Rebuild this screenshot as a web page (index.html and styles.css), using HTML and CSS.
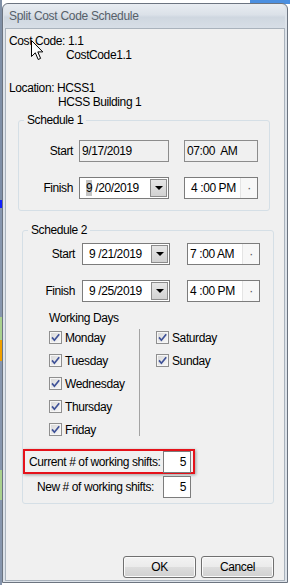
FILE: index.html
```html
<!DOCTYPE html>
<html lang="en">
<head>
    <meta charset="UTF-8">
    <title>Split Cost Code Schedule</title>
    <link rel="stylesheet" href="styles.css">
</head>
<body>
    <svg width="0" height="0" class="defs">
        <defs>
            <linearGradient id="cbg" x1="0" y1="0" x2="1" y2="1">
                <stop offset="0" stop-color="#d9d9d9"/>
                <stop offset="1" stop-color="#f7f7f7"/>
            </linearGradient>
            <symbol id="cb" viewBox="0 0 13 13">
                <rect x="0.5" y="0.5" width="12" height="12" fill="#f6f6f6" stroke="#8f8f8f"/>
                <rect x="2" y="2" width="9" height="9" fill="url(#cbg)"/>
                <path d="M3 6.4 L5.4 9.2 L10.2 3.2" fill="none" stroke="#3f5298" stroke-width="1.7"/>
            </symbol>
        </defs>
    </svg>

    <div class="window">
        <div class="titlebar">Split Cost Code Schedule</div>
        <div class="client">
            <div class="info">
                <div>Cost Code: 1.1</div>
                <div class="sub-code">CostCode1.1</div>
                <div class="loc">Location: HCSS1</div>
                <div class="sub-loc">HCSS Building 1</div>
            </div>

            <!-- schedule 1 -->
            <div class="group g1">
                <span class="legend">Schedule 1</span>
                <div class="row">
                    <span class="label">Start</span>
                    <div class="box date disabled">9/17/2019</div>
                    <div class="box time disabled">07:00  AM</div>
                </div>
                <div class="row">
                    <span class="label">Finish</span>
                    <div class="box date"><span class="sel">9</span> /20/2019<span class="dd"><i></i></span></div>
                    <div class="box time pad7">4 :00 PM<span class="spin">·</span></div>
                </div>
            </div>

            <!-- schedule 2 -->
            <div class="group g2">
                <span class="legend">Schedule 2</span>
                <div class="row">
                    <span class="label">Start</span>
                    <div class="box date">9 /21/2019<span class="dd"><i></i></span></div>
                    <div class="box time">7 :00 AM<span class="spin">·</span></div>
                </div>
                <div class="row">
                    <span class="label">Finish</span>
                    <div class="box date">9 /25/2019<span class="dd"><i></i></span></div>
                    <div class="box time">4 :00 PM<span class="spin">·</span></div>
                </div>

                <div class="wd">Working Days</div>
                <div class="days">
                    <div class="col left">
                        <div class="check"><svg width="13" height="13"><use href="#cb"/></svg>Monday</div>
                        <div class="check"><svg width="13" height="13"><use href="#cb"/></svg>Tuesday</div>
                        <div class="check"><svg width="13" height="13"><use href="#cb"/></svg>Wednesday</div>
                        <div class="check"><svg width="13" height="13"><use href="#cb"/></svg>Thursday</div>
                        <div class="check"><svg width="13" height="13"><use href="#cb"/></svg>Friday</div>
                    </div>
                    <div class="sep"></div>
                    <div class="col right">
                        <div class="check"><svg width="13" height="13"><use href="#cb"/></svg>Saturday</div>
                        <div class="check"><svg width="13" height="13"><use href="#cb"/></svg>Sunday</div>
                    </div>
                </div>

                <div class="shifts current">
                    <span>Current # of working shifts:</span>
                    <div class="num">5</div>
                </div>
                <div class="shifts new">
                    <span>New # of working shifts:</span>
                    <div class="num">5</div>
                </div>
            </div>

            <div class="buttons">
                <button class="btn">OK</button>
                <button class="btn">Cancel</button>
            </div>
        </div>

        <!-- mouse pointer -->
        <svg class="cursor" width="13" height="21" viewBox="0 0 13 21">
            <path d="M0.5 0.5 L0.5 16.5 L4.3 12.8 L7.2 19.5 L9.6 18.4 L6.8 11.9 L11.8 11.9 Z" fill="#fff" stroke="#000" stroke-width="1"/>
        </svg>
    </div>
</body>
</html>
```

FILE: styles.css
```css
*{
    margin: 0;
    padding: 0;
    box-sizing: border-box;
}

body{
    width: 290px;
    height: 585px;
    overflow: hidden;
    font-family: "Liberation Sans", Arial, sans-serif;
    font-size: 12px;
    letter-spacing: -0.4px;
    color: #000;
    background:
        linear-gradient(#7f8fa6 0, #7f8fa6 200px, #1020ff 200px, #1020ff 208px, #8796ad 208px,
            #8796ad 317px, #a9d18e 317px, #a9d18e 340px, #f0a000 340px, #f0a000 361px,
            #8796ad 361px, #8796ad 470px, #a9d18e 470px, #a9d18e 500px, #8796ad 500px) no-repeat 0 0 / 2px 100%,
        linear-gradient(#4b8fe0, #4b8fe0) no-repeat 250px 0 / 40px 4px,
        #fff;
}

.defs{
    position: absolute;
}

.window{
    position: relative;
    margin: 3px 0 0 2px;
    width: 286px;
    height: 580px;
    border: 1px solid #6c7480;
    border-radius: 6px 6px 0 0;
    background: #dde3ea;
    padding: 0 2px 1px 1px;
    display: flex;
    flex-direction: column;
}

.titlebar{
    height: 24px;
    line-height: 24px;
    padding-left: 5px;
    font-size: 12px;
    letter-spacing: -0.3px;
    color: #56606a;
    border-radius: 5px 5px 0 0;
    background: linear-gradient(#e9edf2, #dbe1e8 45%, #cfd7e0 55%, #d7dee6);
}

.client{
    flex: 1;
    background: #f0f0f0;
    border: 1px solid #a9b2bc;
    margin-left: 1px;
}

.info{
    padding: 5px 0 0 3px;
    line-height: 14px;
}

.sub-code{
    padding-left: 57px;
}

.loc{
    margin-top: 19px;
}

.sub-loc{
    padding-left: 49px;
}

.group{
    position: relative;
    width: 252px;
    border: 1px solid #d5dfe6;
    border-radius: 3px;
}

.legend{
    position: absolute;
    top: -8px;
    left: 5px;
    padding: 0 3px;
    line-height: 14px;
    background: #f0f0f0;
}

.g1{
    margin: 11px 0 0 12px;
    padding: 19px 0 11px 0;
}

.g2{
    margin: 19px 0 0 16px;
    padding: 12px 0 5px 0;
}

.row{
    display: flex;
    align-items: center;
    height: 22px;
}

.row + .row{
    margin-top: 15px;
}

.label{
    text-align: right;
}

.g1 .label{ width: 54px; margin-right: 6px; }
.g1 .date{ width: 90px; }
.g1 .time{ width: 74px; margin-left: 15px; }

.g2 .label{ width: 52px; margin-right: 7px; }
.g2 .date{ width: 88px; }
.g2 .time{ width: 73px; margin-left: 17px; }

.box{
    height: 22px;
    border: 1px solid #7c7c7c;
    background: #fff;
    display: flex;
    align-items: center;
    white-space: pre;
}

.date{
    padding-left: 6px;
}

.time{
    padding-left: 2px;
}

.time.pad7{
    padding-left: 6px;
}

.box.disabled{
    background: #f0f0f0;
    border-color: #8c8c8c;
    padding-left: 2px;
}

.sel{
    background: #c4c4c4;
    padding: 1px 0;
}

.dd{
    margin-left: auto;
    margin-right: 1px;
    width: 17px;
    height: 18px;
    border: 1px solid #8c8c8c;
    background: linear-gradient(#e6e6e6, #d2d2d2);
    display: flex;
    justify-content: center;
    align-items: center;
}

.dd i{
    width: 0;
    height: 0;
    border-left: 4px solid transparent;
    border-right: 4px solid transparent;
    border-top: 4px solid #000;
}

.spin{
    margin-left: auto;
    width: 17px;
    height: 20px;
    line-height: 20px;
    text-align: center;
    color: #555;
    border-left: 1px solid #e4e4e4;
    background: #f7f7f7;
}

.wd{
    margin-top: 9px;
    padding-left: 26px;
    line-height: 14px;
}

.days{
    display: flex;
    margin-top: 1px;
    padding-left: 26px;
}

.col{
    display: flex;
    flex-direction: column;
}

.col.left{
    width: 90px;
}

.sep{
    width: 1px;
    height: 107px;
    margin-top: 3px;
    background: #a3a3a3;
}

.col.right{
    margin-left: 16px;
}

.check{
    display: flex;
    align-items: center;
    height: 23px;
}

.check svg{
    margin-right: 3px;
}

.shifts{
    display: flex;
    align-items: center;
}

.current{
    margin-top: 8px;
    width: 172px;
    height: 25px;
    border: 2px solid #e5121a;
    padding: 0 2px 0 4px;
    justify-content: space-between;
    box-shadow: 1px 1px 3px rgba(0, 0, 0, 0.35);
}

.new{
    margin-top: 2px;
    width: 168px;
    height: 22px;
    justify-content: flex-end;
}

.new span{
    margin-right: 9px;
}

.num{
    width: 28px;
    height: 22px;
    line-height: 20px;
    border: 1px solid #7c7c7c;
    background: #fff;
    text-align: right;
    padding-right: 4px;
}

.buttons{
    display: flex;
    justify-content: flex-end;
    gap: 5px;
    width: 252px;
    margin: 52px 0 0 16px;
}

.btn{
    width: 73px;
    height: 22px;
    font: inherit;
    letter-spacing: inherit;
    color: #000;
    border: 1px solid #707070;
    border-radius: 3px;
    background: linear-gradient(#f3f3f3, #ebebeb 50%, #dddddd 51%, #d0d0d0);
    box-shadow: inset 0 0 0 1px #fbfbfb;
}

.cursor{
    position: absolute;
    left: 28px;
    top: 36px;
}
```
